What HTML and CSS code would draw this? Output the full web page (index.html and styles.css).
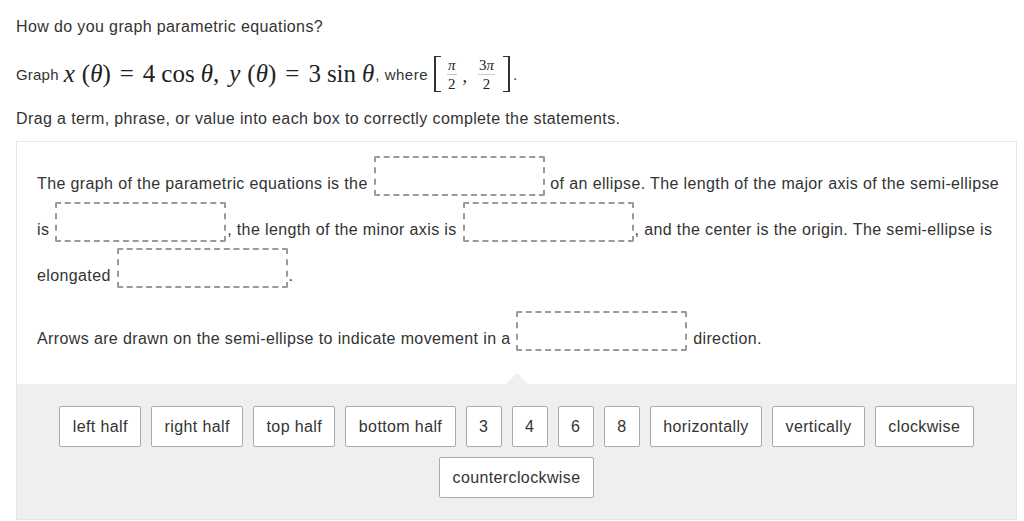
FILE: index.html
```html
<!DOCTYPE html>
<html>
<head>
<meta charset="utf-8">
<link rel="stylesheet" href="styles.css">
</head>
<body>
<p class="q-title">How do you graph parametric equations?</p>
<p class="q-graph"><span>Graph</span><span class="math"><i class="var">x</i><span class="paren">(<i>θ</i>)</span><span class="rel">=</span>4<span class="fn">cos</span><i>θ</i><span class="sep">,</span><i class="var">y</i><span class="paren">(<i>θ</i>)</span><span class="rel">=</span>3<span class="fn">sin</span><i>θ</i></span><span class="where">, where</span><span class="interval"><span class="brk brk-l"></span><span class="frac"><span class="num"><i>π</i></span><span class="den">2</span></span><span class="comma">,</span><span class="frac"><span class="num">3<i>π</i></span><span class="den">2</span></span><span class="brk brk-r"></span></span><span class="dot">.</span></p>
<p class="q-drag">Drag a term, phrase, or value into each box to correctly complete the statements.</p>

<div class="panel">
  <div class="sentences">
    <p class="sent">The graph of the parametric equations is the <span class="blank"></span> of an ellipse. The length of the major axis of the <span class="nowrap">semi-ellipse</span> is <span class="blank"></span>, the length of the minor axis is <span class="blank"></span>, and the center is the origin. The <span class="nowrap">semi-ellipse</span> is elongated <span class="blank"></span>.</p>
    <p class="sent sent-2">Arrows are drawn on the semi-ellipse to indicate movement in a <span class="blank"></span> direction.</p>
  </div>
  <div class="bank">
    <span class="notch"></span>
    <div class="tiles">
      <span class="tile">left half</span>
      <span class="tile">right half</span>
      <span class="tile">top half</span>
      <span class="tile">bottom half</span>
      <span class="tile">3</span>
      <span class="tile">4</span>
      <span class="tile">6</span>
      <span class="tile">8</span>
      <span class="tile">horizontally</span>
      <span class="tile">vertically</span>
      <span class="tile">clockwise</span>
      <span class="tile">counterclockwise</span>
    </div>
  </div>
</div>
</body>
</html>
```
FILE: styles.css
```css
html, body {
  margin: 0;
  background: #ffffff;
}
body {
  padding: 17px 7px 0 16px;
  font-family: "Liberation Sans", Arial, Helvetica, sans-serif;
  font-size: 16px;
  letter-spacing: 0.38px;
  color: #333333;
}
p { margin: 0; }
.nowrap { white-space: nowrap; }
.q-title {
  line-height: 20px;
}
.q-graph {
  margin-top: 25px;
  height: 24px;
  display: flex;
  align-items: center;
  white-space: nowrap;
  font-size: 15px;
  letter-spacing: 0.2px;
}
.math {
  font-family: "Liberation Serif", "Times New Roman", serif;
  font-size: 25px;
  letter-spacing: 0;
  color: #222;
  margin-left: 5px;
}
.math i { font-style: italic; }
.math .var { margin-right: 7px; }
.math .rel { margin: 0 9px; }
.math .fn { margin: 0 6px 0 6px; }
.math .sep { margin-right: 10px; }
.where {
  margin-left: 1px;
  letter-spacing: 0.5px;
}
.interval {
  display: inline-flex;
  align-items: center;
  margin-left: 6px;
  font-family: "Liberation Serif", "Times New Roman", serif;
  letter-spacing: 0;
  color: #222;
  height: 36px;
}
.brk {
  display: inline-block;
  width: 5px;
  height: 34px;
  border-top: 1.5px solid #333;
  border-bottom: 1.5px solid #333;
}
.brk-l { border-left: 2px solid #333; margin-right: 6px; }
.brk-r { border-right: 2px solid #333; margin-left: 8px; }
.frac {
  display: inline-flex;
  flex-direction: column;
  align-items: center;
  font-size: 15px;
  line-height: 16px;
}
.frac .num { border-bottom: 1px solid #c8c8c8; padding: 0 1px 1px; }
.frac .den { padding-top: 1px; }
.comma {
  font-size: 18px;
  margin: 4px 11px 0 6px;
}
.dot { margin-left: 3px; }
.q-drag {
  margin-top: 23px;
  line-height: 20px;
}
.panel {
  margin-top: 12px;
  border: 1px solid #e6e6e6;
  width: 999px;
}
.sentences {
  padding: 14px 14px 27px 20px;
}
.sent {
  line-height: 37px;
}
.sent-2 {
  margin-top: 17px;
}
.blank {
  display: inline-block;
  width: 167px;
  height: 36px;
  border: 2px dashed #9a9a9a;
  border-radius: 2px;
  vertical-align: -7px;
  margin: 0 1px;
}
.bank {
  position: relative;
  background: #efefef;
  padding: 22px 0 21px;
}
.notch {
  position: absolute;
  top: -11px;
  left: 489px;
  width: 0;
  height: 0;
  border-left: 11px solid transparent;
  border-right: 11px solid transparent;
  border-bottom: 11px solid #efefef;
}
.tiles {
  display: flex;
  flex-wrap: wrap;
  justify-content: center;
  gap: 10px;
  padding: 0 20px;
}
.tile {
  display: inline-block;
  height: 39px;
  line-height: 39px;
  padding: 0 12.4px;
  background: #fff;
  border: 1px solid #ababab;
  border-radius: 2px;
  color: #333;
}
```
